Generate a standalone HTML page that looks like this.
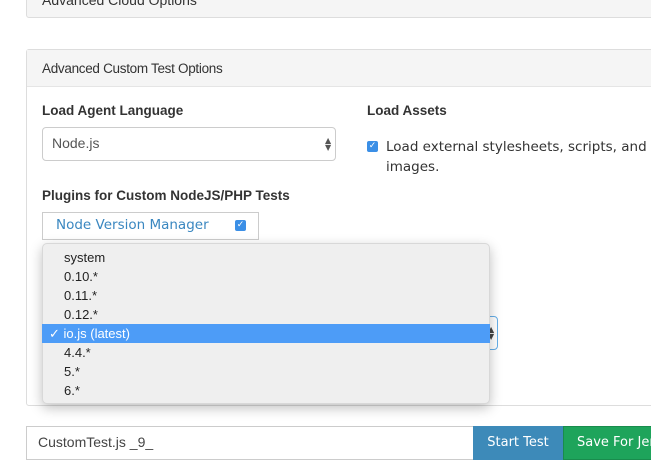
<!DOCTYPE html>
<html><head><meta charset="utf-8"><style>
*{box-sizing:border-box;margin:0;padding:0}
html,body{width:651px;height:464px;overflow:hidden}
body{background:#fff;font-family:"DejaVu Sans","Liberation Sans",sans-serif;color:#333;position:relative}
.abs{position:absolute}
.t{font-size:13px;white-space:nowrap}
.b{font-weight:bold;font-size:13.5px;white-space:nowrap;color:#333;font-family:"Liberation Sans",sans-serif}
.cb{position:absolute;width:11px;height:11px;background:#3b8fe6;border-radius:2px;color:#fff;font-size:9px;line-height:11px;text-align:center}
.li{position:absolute;left:21px;font-family:"Liberation Sans",sans-serif;font-size:13px;color:#222;height:19px;line-height:19px}
</style></head><body>
<div class="abs" style="left:26px;top:-10px;width:640px;height:28px;background:#f5f5f5;border:1px solid #ddd;border-radius:3px"></div>
<div class="abs t" style="left:42px;top:-8px;color:#333;font-family:'Liberation Sans',sans-serif;font-size:14px">Advanced Cloud Options</div>

<div class="abs" style="left:26px;top:49px;width:640px;height:357px;border:1px solid #ddd;border-radius:3px"></div>
<div class="abs" style="left:27px;top:50px;width:630px;height:37px;background:#f5f5f5;border-bottom:1px solid #e5e5e5"></div>
<div class="abs t" style="left:42px;top:61px;font-family:'Liberation Sans',sans-serif;font-size:13.5px;letter-spacing:-0.3px">Advanced Custom Test Options</div>

<div class="abs b" style="left:42px;top:103px">Load Agent Language</div>
<div class="abs" style="left:42px;top:127px;width:294px;height:34px;border:1px solid #ccc;border-radius:4px"></div>
<div class="abs t" style="left:52px;top:135px;color:#555;font-family:'Liberation Sans',sans-serif;font-size:14px">Node.js</div>
<div class="abs" style="left:325px;top:137px;font-size:8px;line-height:7px;color:#555">▲<br>▼</div>

<div class="abs b" style="left:367px;top:103px">Load Assets</div>
<div class="cb" style="left:367px;top:141px">✓</div>
<div class="abs t" style="left:386px;top:137px;line-height:20px;color:#333;font-size:13.5px">Load external stylesheets, scripts, and<br>images.</div>

<div class="abs b" style="left:42px;top:188px">Plugins for Custom NodeJS/PHP Tests</div>
<div class="abs" style="left:42px;top:212px;width:217px;height:28px;border:1px solid #ccc"></div>
<div class="abs t" style="left:56px;top:217px;color:#3a87c0;font-size:13.5px">Node Version Manager</div>
<div class="cb" style="left:235px;top:220px">✓</div>

<div class="abs" style="left:300px;top:316px;width:198px;height:34px;border:1px solid #66afe9;border-radius:4px"></div>
<div class="abs" style="left:488px;top:326px;font-size:8px;line-height:7px;color:#444">▲<br>▼</div>

<div class="abs" style="left:42px;top:243px;width:448px;height:161px;background:#efefef;border:1px solid #d8d8d8;border-radius:5px;box-shadow:0 4px 12px rgba(0,0,0,.25)">
<div class="li" style="top:4px">system</div>
<div class="li" style="top:23px">0.10.*</div>
<div class="li" style="top:42px">0.11.*</div>
<div class="li" style="top:61px">0.12.*</div>
<div style="position:absolute;left:-1px;top:80px;width:448px;height:19px;background:#4d9cf7"></div>
<div class="li" style="top:80px;color:#fff;left:6px">✓ io.js (latest)</div>
<div class="li" style="top:99px">4.4.*</div>
<div class="li" style="top:118px">5.*</div>
<div class="li" style="top:137px">6.*</div>
</div>

<div class="abs" style="left:26px;top:426px;width:448px;height:34px;border:1px solid #ccc;border-right:none"></div>
<div class="abs t" style="left:38px;top:434px;color:#444;font-family:'Liberation Sans',sans-serif;font-size:14px">CustomTest.js _9_</div>
<div class="abs t" style="left:473px;top:426px;width:90px;height:34px;background:#3d8ab9;color:#fff;line-height:34px;text-align:center">Start Test</div>
<div class="abs" style="left:563px;top:426px;width:88px;height:34px;background:#1ea45b;border:1px solid #198c4d;border-right:none;overflow:hidden">
<div class="t" style="color:#fff;line-height:32px;padding-left:13px">Save For Jenkins</div></div>
</body></html>
